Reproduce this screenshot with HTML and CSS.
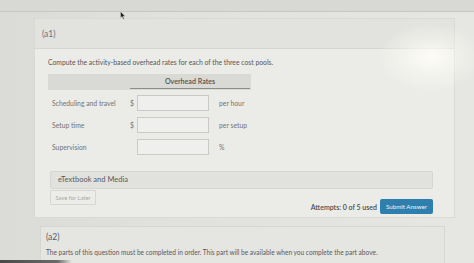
FILE: index.html
```html
<!DOCTYPE html>
<html lang="en">
<head>
<meta charset="utf-8">
<title>Question (a1)</title>
<link rel="stylesheet" href="styles.css">
</head>
<body>
<div class="screen">
  <div class="topbar"></div>
  <div class="main">
    <section class="card">
      <div class="card-head">(a1)</div>
      <div class="card-body">
        <p class="prompt">Compute the activity-based overhead rates for each of the three cost pools.</p>
        <div class="table">
          <div class="thead">
            <div class="th-spacer"></div>
            <div class="th">Overhead Rates</div>
          </div>
          <div class="row">
            <span class="label">Scheduling and travel</span>
            <span class="cur">$</span>
            <span class="input"></span>
            <span class="unit">per hour</span>
          </div>
          <div class="row">
            <span class="label">Setup time</span>
            <span class="cur">$</span>
            <span class="input"></span>
            <span class="unit">per setup</span>
          </div>
          <div class="row">
            <span class="label">Supervision</span>
            <span class="cur"></span>
            <span class="input"></span>
            <span class="unit">%</span>
          </div>
        </div>
        <div class="media">eTextbook and Media</div>
        <div class="actions">
          <button class="save">Save for Later</button>
          <div class="right">
            <span class="attempts">Attempts: 0 of 5 used</span>
            <button class="submit">Submit Answer</button>
          </div>
        </div>
      </div>
    </section>
    <section class="card2">
      <div class="card2-head">(a2)</div>
      <p class="note">The parts of this question must be completed in order. This part will be available when you complete the part above.</p>
    </section>
  </div>
  <div class="glare"></div>
  <svg class="cursor" width="6" height="9" viewBox="0 0 6 9"><path d="M0.5 0.5 L0.5 7 L2 5.6 L3.2 8.3 L4.2 7.9 L3 5.2 L5.2 5.2 Z" fill="#222" stroke="#eee" stroke-width="0.4"/></svg>
  <div class="bezel"></div>
</div>
</body>
</html>
```
FILE: styles.css
```css
* { box-sizing: border-box; }
html, body { margin: 0; padding: 0; }
body {
  font-family: Lato, "Open Sans", "Liberation Sans", sans-serif;
  background: #e0e0de;
}
.screen {
  position: relative;
  width: 474px;
  height: 263px;
  overflow: hidden;
  background: linear-gradient(90deg, #dbdbd8 0%, #e1e1de 40%, #e6e6e3 100%);
}
.topbar {
  height: 12px;
  background: #d8d8d5;
  border-bottom: 1px solid #c6c6c3;
}
.main {
  padding: 6px 19px 0 34px;
}
.card {
  background: #e8e8e5;
  border: 1px solid #d9d9d6;
}
.card-head {
  height: 30px;
  line-height: 30px;
  padding-left: 7px;
  font-size: 8.5px;
  color: #6b7283;
  background: #e2e2df;
  border-bottom: 1px solid #d6d6d3;
}
.card-body {
  background: #ebebe8;
  padding: 9px 21px 3px 13px;
}
.prompt {
  margin: 0;
  font-size: 6.8px;
  line-height: 8px;
  color: #575757;
}
.table {
  margin-top: 8px;
}
.thead {
  display: flex;
  width: 203px;
  height: 16px;
  background: #d9d9d6;
}
.th-spacer { width: 82px; }
.th {
  width: 120px;
  height: 15px;
  line-height: 15px;
  text-align: center;
  font-size: 7.1px;
  font-weight: 600;
  color: #525252;
  border-bottom: 1px solid #8c8c8c;
}
.row {
  display: flex;
  align-items: center;
  height: 16px;
  margin-top: 6px;
  font-size: 6.8px;
  color: #747474;
}
.thead + .row { margin-top: 5px; }
.label {
  width: 80px;
  padding-left: 4px;
}
.cur {
  width: 9px;
  padding-left: 2px;
}
.input {
  width: 72px;
  height: 16px;
  background: #efefed;
  border: 1px solid #c9c9c6;
}
.unit {
  margin-left: 10px;
}
.media {
  margin: 16px 0 0 2px;
  height: 18px;
  line-height: 16px;
  padding-left: 7px;
  font-size: 7.5px;
  color: #5a5a5a;
  background: #e1e1de;
  border: 1px solid #d6d6d3;
  border-radius: 2px;
}
.actions {
  display: flex;
  justify-content: space-between;
  align-items: flex-start;
  margin-left: 2px;
}
.save {
  margin: 1px 0 0 0;
  width: 46px;
  height: 15px;
  padding: 0;
  font-family: inherit;
  font-size: 5.8px;
  color: #a8a8a8;
  background: #ecece9;
  border: 1px solid #d6d6d3;
  border-radius: 1px;
}
.right {
  display: flex;
  align-items: center;
  gap: 3px;
  margin-top: 10px;
}
.attempts {
  font-size: 7px;
  font-weight: 600;
  color: #4c4c4c;
}
.submit {
  width: 53px;
  height: 15px;
  padding: 0;
  font-family: inherit;
  font-size: 6.2px;
  color: #eef4f8;
  background: #2f7fae;
  border: none;
  border-radius: 2px;
}
.card2 {
  margin: 8px 10px 0 6px;
  height: 60px;
  padding: 5px 5px;
  background: #e5e5e2;
  border: 1px solid #d6d6d3;
}
.card2-head {
  font-size: 8.5px;
  line-height: 10px;
  color: #555c68;
}
.note {
  margin: 7px 0 0 0;
  font-size: 6.55px;
  line-height: 8px;
  color: #5a5a5a;
}
.glare {
  position: absolute;
  left: 378px;
  top: 22px;
  width: 96px;
  height: 70px;
  background: radial-gradient(ellipse at 55% 50%, rgba(255,255,246,0.9) 0%, rgba(255,255,246,0.5) 30%, rgba(255,255,246,0) 70%);
  pointer-events: none;
}
.cursor {
  position: absolute;
  left: 120px;
  top: 11px;
}
.bezel {
  position: absolute;
  left: 0;
  bottom: 0;
  width: 72px;
  height: 3px;
  background: linear-gradient(90deg, #4a4a4a, #6a6a6a 80%, rgba(100,100,100,0));
}
```
